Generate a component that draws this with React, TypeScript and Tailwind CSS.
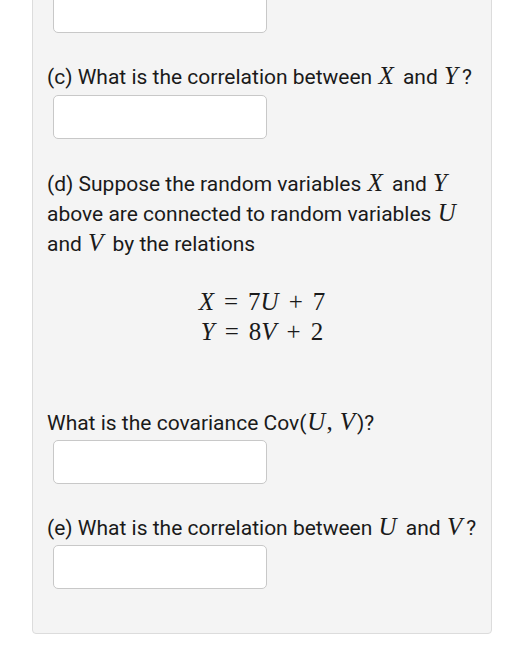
import React from "react";

const M = ({ children, pr = 4 }: { children: React.ReactNode; pr?: number }) => (
  <span
    className="italic text-[25px] leading-[20px] pl-[1px]"
    style={{ fontFamily: '"Liberation Serif", serif', paddingRight: pr }}
  >
    {children}
  </span>
);

const Op = ({ children }: { children: React.ReactNode }) => (
  <span className="mx-[10px] not-italic">{children}</span>
);

const Input = () => (
  <div className="ml-[6px] h-[44px] w-[214px] rounded-[5px] border border-[#c8c8c8] bg-white" />
);

export default function App() {
  return (
    <div
      className="min-h-[663px] w-[532px] overflow-hidden bg-white"
      style={{ fontFamily: 'Roboto, "Liberation Sans", sans-serif' }}
    >
      <div className="ml-[32px] mt-[-40px] w-[460px] rounded-[4px] border border-[#dcdcdc] bg-[#f4f4f4] px-[14px] pt-[28px] pb-[44px] text-[21px] leading-[30px] text-[#1a1a1a]">
        <Input />
        <p className="mt-[29px]">
          (c) What is the correlation between <M>X</M> and <M>Y</M>?
        </p>
        <div className="mt-[3px]">
          <Input />
        </div>
        <p className="mt-[30px]">
          (d) Suppose the random variables <M>X</M> and <M>Y</M>
          <br />
          above are connected to random variables <M>U</M>
          <br />
          and <M>V</M> by the relations
        </p>
        <div
          className="mt-[28px] flex flex-col items-center text-[25px] leading-[30px]"
          style={{ fontFamily: '"Liberation Serif", serif' }}
        >
          <div>
            <span className="italic">X</span>
            <Op>=</Op>7<span className="italic">U</span>
            <Op>+</Op>7
          </div>
          <div>
            <span className="italic">Y</span>
            <Op>=</Op>8<span className="italic">V</span>
            <Op>+</Op>2
          </div>
        </div>
        <p className="mt-[61px]">
          What is the covariance Cov(<M pr={1}>U</M>
          <span className="text-[25px] leading-[20px] pr-[6px]" style={{ fontFamily: '"Liberation Serif", serif' }}>
            ,
          </span>
          <M pr={2}>V</M>)?
        </p>
        <div className="mt-[2px]">
          <Input />
        </div>
        <p className="mt-[29px]">
          (e) What is the correlation between <M>U</M> and <M>V</M>?
        </p>
        <div className="mt-[2px]">
          <Input />
        </div>
      </div>
    </div>
  );
}
